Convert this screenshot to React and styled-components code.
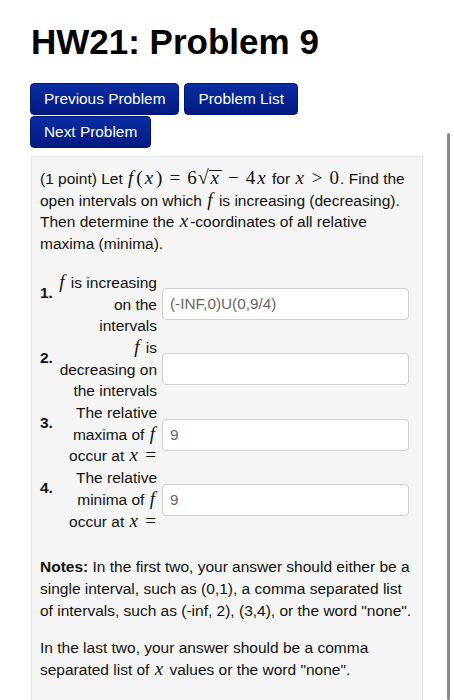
import styled, { createGlobalStyle } from 'styled-components';

const GlobalStyle = createGlobalStyle`
  html, body {
    margin: 0;
    padding: 0;
    background: #ffffff;
  }
  body {
    font-family: "Liberation Sans", Arial, Helvetica, sans-serif;
    color: #111;
  }
`;

function M({ children }) {
  return <MathVar>{children}</MathVar>;
}

const getQuestions = () => [
  { n: '1.', label: <><M>f</M> is increasing on the intervals</>, value: '(-INF,0)U(0,9/4)' },
  { n: '2.', label: <><M>f</M> is decreasing on the intervals</>, value: '' },
  { n: '3.', label: <>The relative maxima of <M>f</M> occur at <M>x</M> <Up>=</Up></>, value: '9' },
  { n: '4.', label: <>The relative minima of <M>f</M> occur at <M>x</M> <Up>=</Up></>, value: '9' },
];

const App = () => {
  const questions = getQuestions();
  return (
    <Page>
      <GlobalStyle />
      <Title>HW21: Problem 9</Title>

      <NavBox>
        <NavRow>
          <NavButton>Previous Problem</NavButton>
          <NavButton>Problem List</NavButton>
        </NavRow>
        <NavRow>
          <NavButton>Next Problem</NavButton>
        </NavRow>
      </NavBox>

      <Panel>
        <Para>
          (1 point) Let <M>f</M><Up>(</Up><M>x</M><Up>)</Up><Up $op>=</Up><Up>6</Up>
          <Sqrt><span className="rad">√</span><span className="under"><M>x</M></span></Sqrt>
          <Up $op>−</Up><Up>4</Up><M>x</M> for <M>x</M><Up $op>&gt;</Up><Up>0</Up>. Find the
          open intervals on which <M>f</M> is increasing (decreasing).
          Then determine the <M>x</M>-coordinates of all relative maxima (minima).
        </Para>

        <QuestionList>
          {questions.map((q) => (
            <QuestionRow key={q.n}>
              <Num>{q.n}</Num>
              <Label>{q.label}</Label>
              <AnswerInput defaultValue={q.value} />
            </QuestionRow>
          ))}
        </QuestionList>

        <Notes>
          <b>Notes:</b> In the first two, your answer should either be a single interval, such as (0,1), a comma
          separated list of intervals, such as (-inf, 2), (3,4), or the word "none".
        </Notes>
        <Notes>
          In the last two, your answer should be a comma separated list of <M>x</M> values or the word "none".
        </Notes>
      </Panel>

      <ScrollThumb />
    </Page>
  );
};

const Page = styled.div`
  padding: 21px 0 0 31px;
  min-height: 700px;
  box-sizing: border-box;
`;

const Title = styled.h1`
  margin: 0 0 20px 0;
  font-size: 35px;
  line-height: 42px;
  font-weight: 700;
  color: #000;
`;

const NavBox = styled.div`
  display: flex;
  flex-direction: column;
  gap: 1px;
  margin-left: -1px;
`;

const NavRow = styled.div`
  display: flex;
  gap: 5px;
`;

const NavButton = styled.button`
  height: 32px;
  padding: 0 13px;
  font-family: "Liberation Sans", Arial, sans-serif;
  font-size: 15.4px;
  color: #fff;
  background: linear-gradient(#0b2ea3, #021980);
  border: 1px solid #021772;
  border-radius: 4px;
  cursor: pointer;
`;

const Panel = styled.div`
  margin-top: 8px;
  width: 392px;
  box-sizing: border-box;
  padding: 11px 10px 30px 8px;
  background: #f5f5f5;
  border: 1px solid #e4e4e4;
  border-bottom: none;
  font-size: 15.5px;
  line-height: 21.7px;
  color: #111;
`;

const Para = styled.p`
  margin: 0;
`;

const MathVar = styled.span`
  font-family: "Liberation Serif", "Times New Roman", serif;
  font-style: italic;
  font-size: 19px;
  line-height: 0;
  letter-spacing: 1px;
  padding: 0 1px;
`;

const Up = styled.span`
  font-family: "Liberation Serif", "Times New Roman", serif;
  font-size: 19px;
  line-height: 0;
  padding: 0 ${(p) => (p.$op ? '6px' : '1px')};
`;

const Sqrt = styled.span`
  display: inline-block;
  font-family: "Liberation Serif", serif;
  line-height: 0;
  .rad {
    font-size: 20px;
  }
  .under {
    display: inline-block;
    border-top: 1px solid #111;
    line-height: 16px;
    padding: 0 1px;
  }
`;

const QuestionList = styled.div`
  margin-top: 17px;
  display: flex;
  flex-direction: column;
`;

const QuestionRow = styled.div`
  display: grid;
  grid-template-columns: 16px 101px 247px;
  align-items: center;
  & > input {
    margin-left: 5px;
  }
`;

const Num = styled.div`
  align-self: start;
  padding-top: 10px;
  font-weight: 700;
`;

const Label = styled.div`
  text-align: right;
`;

const AnswerInput = styled.input`
  width: 247px;
  height: 32px;
  box-sizing: border-box;
  padding: 0 7px;
  font-family: "Liberation Sans", Arial, sans-serif;
  font-size: 15.3px;
  color: #666;
  background: #fff;
  border: 1px solid #cfcfcf;
  border-radius: 4px;
  outline: none;
`;

const Notes = styled.p`
  margin: 24px 0 0 0;
  & + & {
    margin-top: 16px;
  }
  b {
    font-weight: 700;
  }
`;

const ScrollThumb = styled.div`
  position: fixed;
  top: 133px;
  bottom: 0;
  right: 4px;
  width: 3px;
  border-radius: 2px;
  background: #8a8a8a;
`;

export default App;
